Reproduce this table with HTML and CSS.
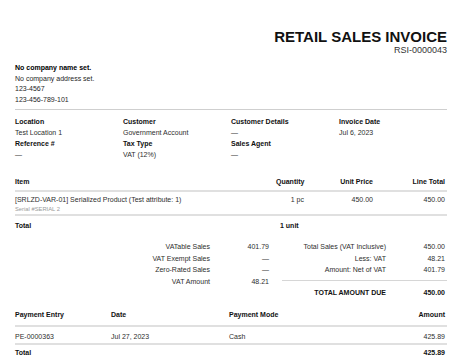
FILE: index.html
```html
<!DOCTYPE html>
<html>
<head>
<meta charset="utf-8">
<title>Retail Sales Invoice</title>
<link rel="stylesheet" href="styles.css">
</head>
<body>
<div class="page">
  <div class="title-block">
    <h1 class="title">RETAIL SALES INVOICE</h1>
    <div class="doc-no">RSI-0000043</div>
  </div>

  <div class="company">
    <div class="company-name">No company name set.</div>
    <div>No company address set.</div>
    <div>123-4567</div>
    <div>123-456-789-101</div>
  </div>

  <div class="rule"></div>

  <div class="info">
    <div class="cell"><div class="lbl">Location</div><div class="val">Test Location 1</div></div>
    <div class="cell"><div class="lbl">Customer</div><div class="val">Government Account</div></div>
    <div class="cell"><div class="lbl">Customer Details</div><div class="val">—</div></div>
    <div class="cell"><div class="lbl">Invoice Date</div><div class="val">Jul 6, 2023</div></div>
    <div class="cell"><div class="lbl">Reference #</div><div class="val">—</div></div>
    <div class="cell"><div class="lbl">Tax Type</div><div class="val">VAT (12%)</div></div>
    <div class="cell"><div class="lbl">Sales Agent</div><div class="val">—</div></div>
    <div class="cell"></div>
  </div>

  <table class="items">
    <colgroup>
      <col class="c-item"><col class="c-qty"><col class="c-price"><col class="c-total">
    </colgroup>
    <thead>
      <tr>
        <th class="left">Item</th>
        <th class="right">Quantity</th>
        <th class="right">Unit Price</th>
        <th class="right">Line Total</th>
      </tr>
    </thead>
    <tbody>
      <tr class="item-row">
        <td class="left">[SRLZD-VAR-01] Serialized Product (Test attribute: 1)<div class="serial">Serial #SERIAL 2</div></td>
        <td class="right top">1 pc</td>
        <td class="right top">450.00</td>
        <td class="right top">450.00</td>
      </tr>
    </tbody>
    <tfoot>
      <tr>
        <td class="left strong">Total</td>
        <td class="strong unit" colspan="3">1 unit</td>
      </tr>
    </tfoot>
  </table>

  <div class="summary">
    <div class="sum-left">
      <div class="s-lbl">VATable Sales</div><div class="s-val">401.79</div>
      <div class="s-lbl">VAT Exempt Sales</div><div class="s-val">—</div>
      <div class="s-lbl">Zero-Rated Sales</div><div class="s-val">—</div>
      <div class="s-lbl">VAT Amount</div><div class="s-val">48.21</div>
    </div>
    <div class="sum-right">
      <div class="s-lbl">Total Sales (VAT Inclusive)</div><div class="s-val">450.00</div>
      <div class="s-lbl">Less: VAT</div><div class="s-val">48.21</div>
      <div class="s-lbl">Amount: Net of VAT</div><div class="s-val">401.79</div>
      <div class="s-sep"></div>
      <div class="s-lbl due">TOTAL AMOUNT DUE</div><div class="s-val due">450.00</div>
    </div>
  </div>

  <table class="payments">
    <colgroup>
      <col class="p-entry"><col class="p-date"><col class="p-mode"><col class="p-amt">
    </colgroup>
    <thead>
      <tr>
        <th class="left">Payment Entry</th>
        <th class="left">Date</th>
        <th class="left">Payment Mode</th>
        <th class="right">Amount</th>
      </tr>
    </thead>
    <tbody>
      <tr>
        <td class="left">PE-0000363</td>
        <td class="left">Jul 27, 2023</td>
        <td class="left">Cash</td>
        <td class="right">425.89</td>
      </tr>
    </tbody>
    <tfoot>
      <tr>
        <td class="left strong" colspan="3">Total</td>
        <td class="right strong">425.89</td>
      </tr>
    </tfoot>
  </table>
</div>
</body>
</html>
```

FILE: styles.css
```css
html, body {
  margin: 0;
  padding: 0;
  background: #ffffff;
}

body {
  font-family: "Liberation Sans", Arial, sans-serif;
  color: #262626;
  font-size: 7px;
  line-height: 10.7px;
}

.page {
  padding: 28px 27px 0 15px;
}

/* Title */
.title-block {
  text-align: right;
}

.title {
  margin: 0;
  font-size: 15px;
  line-height: 17px;
  font-weight: bold;
  color: #111111;
}

.doc-no {
  font-size: 9px;
  line-height: 10px;
  margin-top: 0;
  color: #333333;
}

/* Company */
.company {
  margin-top: 8px;
}

.company-name {
  font-weight: bold;
  color: #000000;
}

.rule {
  margin-top: 3px;
  border-top: 1px solid #cfcfcf;
}

/* Info grid */
.info {
  margin-top: 7px;
  display: grid;
  grid-template-columns: repeat(4, 1fr);
  row-gap: 1px;
}

.lbl {
  font-weight: bold;
  color: #111111;
}

.val {
  color: #2e2e2e;
}

/* Tables */
table {
  width: 100%;
  border-collapse: collapse;
  table-layout: fixed;
}

th, td {
  padding: 0 2px;
  font-size: 7px;
  line-height: 10.7px;
  white-space: nowrap;
}

th {
  font-weight: bold;
  color: #111111;
}

td {
  color: #2e2e2e;
}

.left { text-align: left; }
.right { text-align: right; }
.top { vertical-align: top; }
.strong { font-weight: bold; color: #111111; }

th:first-child, td:first-child { padding-left: 0; }

.items {
  margin-top: 16px;
}

.c-item { width: 259px; }
.c-qty { width: 32px; }
.c-price { width: 69px; }
.c-total { width: 72px; }

.items thead th {
  padding-bottom: 3px;
  border-bottom: 2px solid #e0e0e0;
}

.items .item-row td {
  padding-top: 2.5px;
  padding-bottom: 1px;
  border-bottom: 2px solid #e0e0e0;
}

.serial {
  font-size: 5.8px;
  line-height: 7.5px;
  color: #9a9a9a;
}

.items tfoot td {
  padding-top: 5px;
}

.items .unit {
  padding-left: 6px;
}

/* Summary */
.summary {
  margin-top: 9.5px;
  display: flex;
  justify-content: space-between;
  align-items: flex-start;
}

.sum-left {
  display: grid;
  grid-template-columns: 195px 59px;
}

.sum-right {
  width: 165px;
  display: grid;
  grid-template-columns: 104px 61px;
}

.s-lbl, .s-val {
  text-align: right;
  line-height: 11.6px;
  color: #2e2e2e;
}

.sum-right .s-val {
  padding-right: 2px;
}

.s-sep {
  grid-column: 1 / span 2;
  margin-top: 4px;
  border-top: 1px solid #d6d6d6;
  height: 0;
}

.s-lbl.due, .s-val.due {
  font-weight: bold;
  color: #111111;
  padding-top: 6px;
}

/* Payments */
.payments {
  margin-top: 11px;
}

.p-entry { width: 94px; }
.p-date { width: 118px; }
.p-mode { width: 150px; }
.p-amt { width: 70px; }

.payments thead th {
  padding-bottom: 5px;
  border-bottom: 2px solid #e0e0e0;
}

.payments tbody td {
  padding-top: 4.5px;
  padding-bottom: 0;
  border-bottom: 2px solid #e0e0e0;
}

.payments tfoot td {
  padding-top: 3px;
}
```
